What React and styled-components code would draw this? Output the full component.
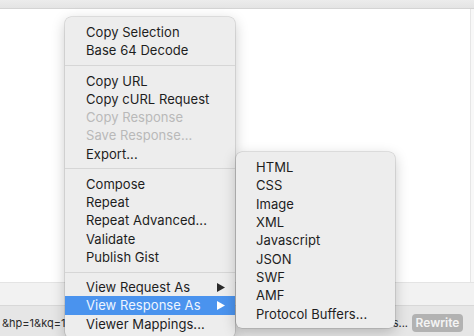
import React from "react";
import styled, { createGlobalStyle } from "styled-components";

const Global = createGlobalStyle`
  html, body { margin: 0; padding: 0; }
  body { width: 474px; height: 336px; overflow: hidden; font-family: Inter, "Liberation Sans", sans-serif; }
`;

const Window = styled.div`
  position: relative;
  width: 474px;
  height: 336px;
  display: flex;
  flex-direction: column;
  background: #fff;
  overflow: hidden;
`;

const TopBar = styled.div`
  height: 8px;
  flex: none;
  background: linear-gradient(#ececec, #e4e4e4);
  border-bottom: 1px solid #d4d4d4;
`;

const Content = styled.div`
  flex: 1;
  display: flex;
  justify-content: flex-end;
  background: #fff;
`;

const ScrollStrip = styled.div`
  width: 3px;
  border-left: 1px solid #e6e6e6;
  background: #f8f8f8;
`;

const InfoBar = styled.div`
  height: 22px;
  flex: none;
  background: #f2f2f2;
  border-top: 1px solid #e4e4e4;
`;

const BottomBar = styled.div`
  height: 30px;
  flex: none;
  display: flex;
  align-items: center;
  background: #e6e6e6;
  border-top: 1px solid #d8d8d8;
  padding: 0 11px 0 2px;
  gap: 4px;
`;

const UrlText = styled.div`
  flex: 1;
  font-size: 11px;
  color: #2a2a2a;
  white-space: nowrap;
  overflow: hidden;
  padding-top: 3px;
`;

const Trailing = styled.div`
  font-size: 11px;
  color: #2a2a2a;
  padding-top: 3px;
`;

const RewriteButton = styled.div`
  width: 51px;
  height: 18px;
  border-radius: 4px;
  background: #b2b2b2;
  color: #f4f4f4;
  font-size: 12px;
  font-weight: 600;
  display: flex;
  align-items: center;
  justify-content: center;
  margin-top: 3px;
`;

const Menu = styled.div`
  position: absolute;
  left: ${(p) => p.$left}px;
  top: ${(p) => p.$top}px;
  width: ${(p) => p.$width}px;
  padding: 6px 0 5px;
  background: #ededed;
  border-radius: 6px;
  box-shadow: 0 0 0 0.5px rgba(0, 0, 0, 0.18), 0 4px 14px rgba(0, 0, 0, 0.22);
  z-index: ${(p) => p.$z};
`;

const Item = styled.div`
  height: 18.3px;
  display: flex;
  align-items: center;
  justify-content: space-between;
  padding: 0 10px 0 ${(p) => p.$indent}px;
  font-size: 13px;
  letter-spacing: 0.05px;
  color: ${(p) => (p.$disabled ? "#b9b9b9" : p.$active ? "#eef5ff" : "#1d1d1d")};
  background: ${(p) => (p.$active ? "#4a93ee" : "transparent")};
  white-space: nowrap;
`;

const Separator = styled.div`
  height: 1px;
  margin: 5.4px 0;
  background: #d6d6d6;
`;

const Arrow = ({ color }) => (
  <svg width="8" height="9" viewBox="0 0 8 9">
    <polygon points="0,0 8,4.5 0,9" fill={color} />
  </svg>
);

const mainItems = [
  ["Copy Selection"],
  ["Base 64 Decode"],
  "sep",
  ["Copy URL"],
  ["Copy cURL Request"],
  ["Copy Response", { disabled: true }],
  ["Save Response...", { disabled: true }],
  ["Export..."],
  "sep",
  ["Compose"],
  ["Repeat"],
  ["Repeat Advanced..."],
  ["Validate"],
  ["Publish Gist"],
  "sep",
  ["View Request As", { sub: true }],
  ["View Response As", { sub: true, active: true }],
  ["Viewer Mappings..."],
];

const subItems = ["HTML", "CSS", "Image", "XML", "Javascript", "JSON", "SWF", "AMF", "Protocol Buffers..."];

export default function App() {
  return (
    <Window>
      <Global />
      <TopBar />
      <Content>
        <ScrollStrip />
      </Content>
      <InfoBar />
      <BottomBar>
        <UrlText>&amp;hp=1&amp;kq=1</UrlText>
        <Trailing>Actions...</Trailing>
        <RewriteButton>Rewrite</RewriteButton>
      </BottomBar>

      <Menu $left={65} $top={17} $width={170} $z={1}>
        {mainItems.map((it, i) =>
          it === "sep" ? (
            <Separator key={i} />
          ) : (
            <Item
              key={i}
              $indent={21}
              $disabled={it[1]?.disabled}
              $active={it[1]?.active}
            >
              <span>{it[0]}</span>
              {it[1]?.sub && <Arrow color={it[1]?.active ? "#ffffff" : "#2a2a2a"} />}
            </Item>
          )
        )}
      </Menu>

      <Menu $left={236} $top={152} $width={159} $z={2}>
        {subItems.map((s) => (
          <Item key={s} $indent={20}>
            <span>{s}</span>
          </Item>
        ))}
      </Menu>
    </Window>
  );
}
